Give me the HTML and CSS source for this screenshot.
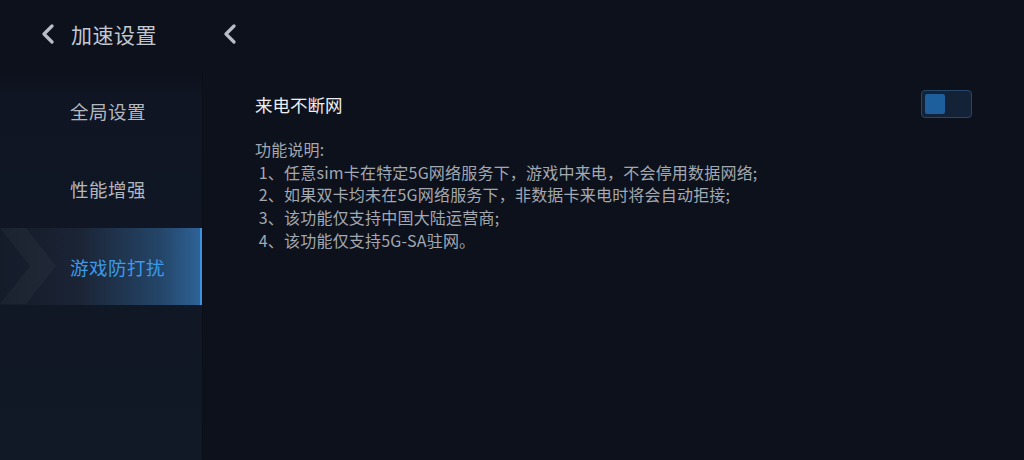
FILE: index.html
```html
<!DOCTYPE html>
<html lang="zh">
<head>
<meta charset="utf-8">
<link rel="stylesheet" href="styles.css">
</head>
<body>
<div class="app">
  <header class="top">
    <div class="title-group">
      <svg class="chev" viewBox="0 0 16 20" width="16" height="20"><path d="M12 2 L4 10 L12 18" fill="none" stroke="#b9bdc6" stroke-width="3.2" stroke-linecap="round" stroke-linejoin="round"/></svg>
      <span class="title">加速设置</span>
    </div>
    <svg class="chev chev2" viewBox="0 0 16 20" width="16" height="20"><path d="M12 2 L4 10 L12 18" fill="none" stroke="#b9bdc6" stroke-width="3.2" stroke-linecap="round" stroke-linejoin="round"/></svg>
  </header>
  <div class="body">
    <nav class="side">
      <div class="item">全局设置</div>
      <div class="item">性能增强</div>
      <div class="item active">
        <svg class="arrows" viewBox="0 0 80 76" width="80" height="76"><path d="M0 0 H26 L56 38 L26 76 H0 L30 38 Z" fill="rgba(255,255,255,0.03)"/></svg>
        <span>游戏防打扰</span>
      </div>
    </nav>
    <main class="content">
      <div class="row">
        <span class="label">来电不断网</span>
        <div class="toggle"><div class="knob"></div></div>
      </div>
      <div class="desc">
        <p>功能说明:</p>
        <p>&nbsp;1、任意sim卡在特定5G网络服务下，游戏中来电，不会停用数据网络;</p>
        <p>&nbsp;2、如果双卡均未在5G网络服务下，非数据卡来电时将会自动拒接;</p>
        <p>&nbsp;3、该功能仅支持中国大陆运营商;</p>
        <p>&nbsp;4、该功能仅支持5G-SA驻网。</p>
      </div>
    </main>
  </div>
</div>
</body>
</html>
```
FILE: styles.css
```css
* { box-sizing: border-box; margin: 0; padding: 0; }
html, body { width: 1024px; height: 460px; overflow: hidden; }
body {
  background: #0c111c;
  font-family: "Noto Sans CJK SC", "Noto Sans", sans-serif;
  color: #b8bcc5;
}
.app { display: flex; flex-direction: column; height: 460px; }
.top {
  height: 72px;
  display: flex;
  align-items: center;
  padding-bottom: 4px;
}
.title-group {
  width: 222px;
  display: flex;
  align-items: center;
  padding-left: 40px;
}
.chev { display: block; }
.title {
  font-size: 21px;
  margin-left: 15px;
  color: #c3c7cf;
  letter-spacing: 0.5px;
}
.body { flex: 1; display: flex; }
.side {
  width: 203px;
  background: linear-gradient(180deg, #0c111c 0%, #0f1522 6%, #121926 100%);
  border-right: 1px solid #0a0e17;
  display: flex;
  flex-direction: column;
}
.item {
  height: 78px;
  display: flex;
  align-items: center;
  padding-left: 70px;
  font-size: 18.5px;
  color: #b3b7c0;
  letter-spacing: 0.5px;
  position: relative;
}
.item.active {
  height: 77px;
  color: #3b9aea;
  background: linear-gradient(90deg, #141b29 0%, #1b2435 40%, #244568 80%, #2e6296 100%);
  border-right: 2px solid #3d93e0;
}
.item.active span { position: relative; }
.arrows { position: absolute; left: 0; top: 0; }
.content {
  flex: 1;
  padding: 18px 52px 0 52px;
}
.row {
  display: flex;
  align-items: center;
  justify-content: space-between;
  height: 28px;
}
.label {
  font-size: 17.5px;
  color: #eceef2;
}
.toggle {
  width: 51px;
  height: 28px;
  border: 1.5px solid #264669;
  border-radius: 4px;
  background: #142238;
  padding: 2.5px;
}
.knob {
  width: 20px;
  height: 20px;
  background: #1d5e9c;
  border-radius: 2px;
}
.desc {
  margin-top: 20px;
  font-size: 16px;
  line-height: 22.7px;
  letter-spacing: 0.2px;
  color: #a3a8b1;
}
```
